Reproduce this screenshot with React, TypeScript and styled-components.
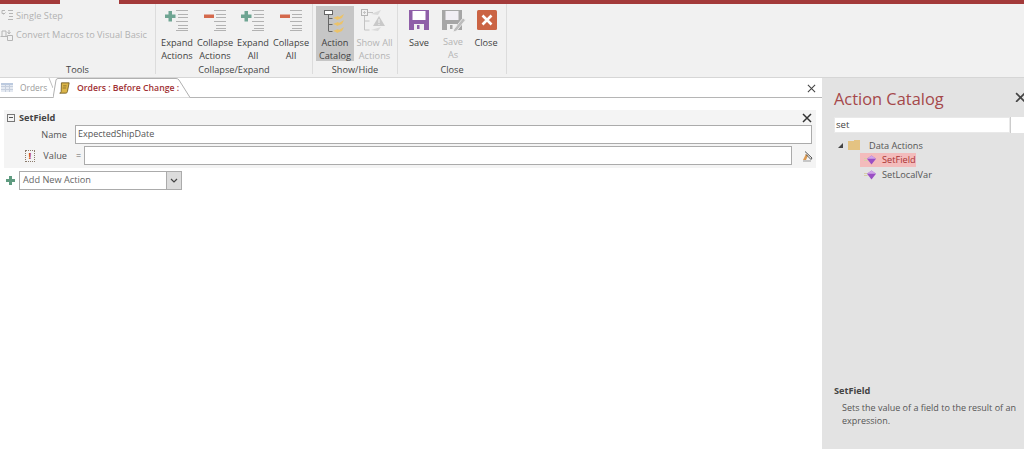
import React from "react";
import styled, { createGlobalStyle } from "styled-components";

const Global = createGlobalStyle`
  html, body { margin: 0; padding: 0; background: #fff; }
  body { font-family: "Open Sans", "Noto Sans", "Liberation Sans", sans-serif; font-size: 10px; color: #444; overflow: hidden; }
  * { box-sizing: border-box; }
  svg { flex: none; }
`;

const Page = styled.div`width: 1024px; height: 449px; display: flex; flex-direction: column; overflow: hidden;`;
const TopBar = styled.div`height: 4px; display: flex; flex: none;`;
const TopSeg = styled.div<{ $w?: number; $active?: boolean }>`
  background: ${p => (p.$active ? "#f1f1f1" : "#a33a3a")};
  ${p => (p.$w ? `width:${p.$w}px;flex:none;` : "flex:1;")}
`;
const Ribbon = styled.div`
  height: 74px; flex: none; display: flex; background: #f1f1f1; border-bottom: 1px solid #d6d6d6;
`;
const Group = styled.section<{ $w: number }>`
  width: ${p => p.$w}px; flex: none; display: flex; flex-direction: column; border-right: 1px solid #dcdcdc; height: 70px;
`;
const GroupBody = styled.div<{ $pad?: number }>`
  flex: 1; display: flex; padding: 2px 0 0 ${p => p.$pad ?? 2}px; min-height: 0;
`;
const GroupLabel = styled.div`
  height: 13px; line-height: 13px; text-align: center; font-size: 9.2px; color: #444; margin-bottom: -1px; position: relative; top: 1px;
`;
const ToolList = styled.div`display: flex; flex-direction: column; gap: 1px; margin-left: -2px;`;
const ToolRow = styled.div`
  display: flex; align-items: center; gap: 2px; height: 18px; color: #b1b1b1; font-size: 9.2px; white-space: nowrap;
`;
const BigButton = styled.div<{ $w?: number; $on?: boolean; $off?: boolean }>`
  width: ${p => p.$w ?? 38}px; height: 55px; flex: none; display: flex; flex-direction: column; align-items: center;
  padding-top: 3px; text-align: center; line-height: 13px; font-size: 9.2px;
  background: ${p => (p.$on ? "#c6c6c6" : "transparent")};
  color: ${p => (p.$off ? "#b4b4b4" : "#3f3f3f")};
  white-space: nowrap;
`;
const BigIcon = styled.div`height: 25px; margin-bottom: 2px; display: flex; align-items: flex-start; justify-content: center;`;

const Main = styled.div`flex: 1; display: flex; min-height: 0;`;
const Work = styled.div`width: 822px; flex: none; display: flex; flex-direction: column;`;
const TabStrip = styled.div`
  height: 20px; flex: none; display: flex; align-items: stretch; border-bottom: 1px solid #b5b5b5; background: #fff; position: relative;
`;
const Tab = styled.div<{ $w: number; $active?: boolean }>`
  width: ${p => p.$w}px; flex: none; position: relative; display: flex; align-items: center; gap: 7px;
  padding-left: ${p => (p.$active ? 5 : 1)}px; font-size: ${p => (p.$active ? 8.7 : 8.4)}px; white-space: nowrap;
  color: ${p => (p.$active ? "#9f2f33" : "#9a9a9a")}; font-weight: ${p => (p.$active ? 600 : 400)};
`;
const TabShape = styled.svg`position: absolute; left: 0; top: 0; pointer-events: none;`;
const TabInner = styled.span`position: relative; display: flex; align-items: center;`;
const StripClose = styled.div`
  position: absolute; right: 5px; top: 4px; width: 10px; height: 10px;
`;
const Canvas = styled.div`flex: 1; padding: 12px 6px 0 4px;`;
const ActionBlock = styled.div`background: #f4f4f4; height: 58px; display: flex; flex-direction: column; gap: 2px; width: 812px;`;
const ActionHead = styled.div`
  height: 13px; margin-top: 1px; margin-bottom: -1px; display: flex; align-items: center; padding: 0 4px 0 3px; font-weight: 700; font-size: 9.2px; color: #444;
`;
const HeadTitle = styled.span`flex: 1; margin-left: 4px;`;
const Collapse = styled.span`
  width: 8px; height: 8px; border: 1px solid #777; position: relative; flex: none;
  &::after { content: ""; position: absolute; left: 1px; right: 1px; top: 2px; height: 1px; background: #555; }
`;
const ArgRow = styled.div`display: flex; align-items: center; height: 19px; margin-top: 0;`;
const ArgLabel = styled.div<{ $w: number }>`
  width: ${p => p.$w}px; flex: none; text-align: right; padding-right: 8px; font-size: 9.2px; color: #555;
`;
const Warn = styled.span`
  width: 10px; height: 12px; border: 1px dotted #8a7a6a; color: #c0392b; font-weight: 800; font-size: 8px; line-height: 10px; text-align: center;
  margin-left: 21px; flex: none;
`;
const Eq = styled.span`width: 9px; flex: none; padding-left: 1px; color: #666; font-size: 9px;`;
const Field = styled.div<{ $w: number; $h?: number }>`
  width: ${p => p.$w}px; height: ${p => p.$h ?? 19}px; flex: none; background: #fff; border: 1px solid #ababab;
  padding-left: 2px; line-height: 16px; font-size: 9px; color: #555;
`;
const Builder = styled.span`margin-left: 10px; display: flex;`;
const AddRow = styled.div`display: flex; align-items: center; margin-top: 3px; padding-left: 2px;`;
const AddPlus = styled.span`width: 13px; flex: none; display: flex;`;
const Combo = styled.div`
  width: 163px; height: 19px; display: flex; background: #fff; border: 1px solid #ababab; font-size: 9.2px; color: #666; line-height: 16px; padding-left: 3px;
`;
const ComboText = styled.span`flex: 1;`;
const ComboBtn = styled.span`
  width: 15px; flex: none; background: #dcdcdc; border-left: 1px solid #ababab; display: flex; align-items: center; justify-content: center;
`;

const Panel = styled.aside`
  width: 202px; flex: none; background: #e3e3e3; display: flex; flex-direction: column; padding: 0 0 0 12px; position: relative;
`;
const PanelTitle = styled.div`font-size: 16.4px; color: #a5484a; line-height: 24px; margin-top: 9px; white-space: nowrap;`;
const PanelClose = styled.div`position: absolute; right: 0; top: 14px; width: 9px; height: 10px; overflow: hidden;`;
const SearchRow = styled.div`display: flex; margin-top: 6px;`;
const SearchBox = styled.div`width: 176px; height: 16px; background: #fff; border: 1px solid #e9e9e9; padding-left: 1px; line-height: 14px; font-size: 9.6px; color: #444;`;
const SearchBtn = styled.div`flex: 1; height: 16px; background: #fff; border-left: 1px solid #ccc;`;
const Tree = styled.div`margin-top: 5px; font-size: 9.2px; color: #555;`;
const TreeRoot = styled.div`display: flex; align-items: center; height: 14px; padding-left: 4px;`;
const Arrow = styled.span`width: 0; height: 0; border-style: solid; border-width: 0 0 5px 5px; border-color: transparent transparent #444 transparent; flex: none;`;
const Folder = styled.span`
  width: 12px; height: 9px; background: #e4c382; margin-left: 5px; flex: none; position: relative;
  &::before { content: ""; position: absolute; right: 0; top: -1px; width: 6px; height: 1px; background: #e4c382; }
`;
const RootText = styled.span`margin-left: 9px;`;
const Leaf = styled.div<{ $sel?: boolean }>`
  display: flex; align-items: center; height: 14px; margin: 0 0 0 26px; padding: 0 0 0 4px; gap: 4px; width: 56px;
  white-space: nowrap; background: ${p => (p.$sel ? "#f3bcbc" : "transparent")}; color: ${p => (p.$sel ? "#a33" : "#555")};
`;
const LeafRow = styled.div`height: 15px; display: flex; align-items: center;`;
const Help = styled.div`margin-top: auto; padding-bottom: 22px;`;
const HelpTitle = styled.div`font-weight: 700; font-size: 9.2px; color: #444; line-height: 13px;`;
const HelpText = styled.div`margin: 4px 0 0 8px; width: 178px; font-size: 9px; line-height: 13px; color: #555;`;

const Lines = () => (
  <path d="M13 1.500h12M15 5.500h10M15 8.500h10M13 12.500h12M15 16.500h10M15 19.500h10M13 21.500h12" stroke="#b2b2b2" strokeWidth="1" fill="none" />
);
const ExpandIcon = () => (
  <svg width="28" height="25" viewBox="0 0 28 25">
    <path d="M5.500 2h3.500v3.500h3.500v3.500h-3.500v3.500h-3.500v-3.500h-3.500v-3.500h3.500z" fill="#6fa593" />
    <Lines />
  </svg>
);
const CollapseIcon = () => (
  <svg width="28" height="25" viewBox="0 0 28 25"><rect x="3" y="5.500" width="10" height="3.500" fill="#d4694c" /><Lines /></svg>
);
const CatalogIcon = () => (
  <svg width="28" height="27" viewBox="0 0 28 27">
    <rect x="3.500" y="1.500" width="8" height="4" fill="#fff" stroke="#666" />
    <path d="M7.500 6v16M7.500 9.500h4M7.500 15.500h4M7.500 22.500h4" stroke="#666" fill="none" />
    <path d="M12 9l5-2 1 1 5-3-2 4-5 2-1-1zM12 15l5-2 1 1 5-3-2 4-5 2-1-1zM12 22l5-2 1 1 5-3-2 4-5 2-1-1z" fill="#ecc36a" />
  </svg>
);
const ShowAllIcon = () => (
  <svg width="28" height="27" viewBox="0 0 28 27">
    <rect x=".5" y=".5" width="6" height="6" fill="none" stroke="#b5b5b5" />
    <path d="M2 3.500h3M3.500 2v3M3.500 7v14M7 3.500h5M3.500 12h5M3.500 21h5" stroke="#c4c4c4" fill="none" />
    <path d="M10 5l10-4-3 5zM10 21l10-3-3 4z" fill="#dadada" />
    <path d="M18 7l6 10h-12z" fill="#c9c9c9" />
    <path d="M18 10v4M18 15v1" stroke="#f4f4f4" />
  </svg>
);
const SaveIcon = ({ off }: { off?: boolean }) => {
  const body = off ? "#a6a6a6" : "#8f5fa8";
  return (
    <svg width="26" height="24" viewBox="0 0 26 24">
      <g transform={off ? "translate(-1 0)" : undefined}>
        <path d="M3 1h20v20h-20z" fill={body} />
        <rect x="6.500" y="2" width="13" height="9" fill={off ? "#f1eef4" : "#fff"} />
        <rect x="8" y="15" width="10" height="6" fill="#f1f1f1" />
        <rect x="11" y="16" width="2.500" height="4" fill={body} />
      </g>
      {off && <path d="M14 20l9-11 2.500 2-9 11-3.500 1z" fill="#bdbdbd" stroke="#f1f1f1" strokeWidth=".8" />}
    </svg>
  );
};
const CloseIcon = () => (
  <svg width="24" height="24" viewBox="0 0 24 24">
    <rect x="3" y="1" width="20" height="20" rx="1.500" fill="#cb6444" />
    <path d="M8.500 6.500l9 9M17.500 6.500l-9 9" stroke="#fff" strokeWidth="2.600" />
  </svg>
);
const StepIcon = () => (
  <svg width="14" height="13" viewBox="0 0 14 13"><path d="M2 1.500h3M2 1.500v3h3M3.500 5.500l2-2M8 1.500h5M9 4.500h4M9 7.500h4M8 10.500h5" stroke="#b5b5b5" fill="none" /></svg>
);
const ConvertIcon = () => (
  <svg width="14" height="13" viewBox="0 0 14 13"><path d="M2 8v-5h4v5M.5 8.500h7M9 2v3M7.500 4l1.500 2 1.500-2M7.500 7.500h5v5h-5z" stroke="#b5b5b5" fill="none" /></svg>
);
const X = ({ s = 10, w = 1.200, c = "#444" }: { s?: number; w?: number; c?: string }) => (
  <svg width={s} height={s} viewBox="0 0 10 10"><path d="M1 1l8 8M9 1l-8 8" stroke={c} strokeWidth={w} /></svg>
);
const TableIcon = () => (
  <svg width="12" height="9" viewBox="0 0 12 9">
    <rect width="12" height="9" fill="#e4e9f1" />
    <path d="M0 3.500h12M0 6.500h12M4.500 0v9M8.500 0v9" stroke="#c6cfdd" />
    <rect width="12" height="2" fill="#bccadf" />
  </svg>
);
const ScrollIcon = () => (
  <svg width="12" height="12" viewBox="0 0 14 14">
    <path d="M4 1h9l-2 10c-.3 1.500-1 2-2 2h-7c1 0 1.500-1 1.700-2z" fill="#dcb649" stroke="#6f5a22" strokeWidth="1" />
    <path d="M6 4.500h4M5.500 7h4" stroke="#6f5a22" strokeWidth=".8" />
  </svg>
);
const GemIcon = () => (
  <svg width="14" height="10" viewBox="0 0 14 10">
    <path d="M0 3.500h3.500M0 5.500h3.500" stroke="#d6cfa8" strokeWidth="1.200" />
    <path d="M7.500 .5l4.500 3.200-4.500 5.800-4.500-5.800z" fill="#9a4fc4" />
    <path d="M7.500 .5l4.500 3.200h-9z" fill="#d0a5e8" />
  </svg>
);
const BuilderIcon = () => (
  <svg width="11" height="12" viewBox="0 0 11 12">
    <path d="M1 10l3-6 2 1.500-2 4.500z" fill="#dc9a52" />
    <path d="M3 1.500l7 6.500-1 1.500-5-5" stroke="#555" fill="none" />
    <path d="M1 11h8" stroke="#999" />
  </svg>
);

const collapseButtons = [
  ["Expand", "Actions", false],
  ["Collapse", "Actions", true],
  ["Expand", "All", false],
  ["Collapse", "All", true],
] as const;

export default function App() {
  return (
    <Page>
      <Global />
      <TopBar>
        <TopSeg $w={60} />
        <TopSeg $w={59} $active />
        <TopSeg />
      </TopBar>
      <Ribbon>
        <Group $w={156}>
          <GroupBody>
            <ToolList>
              <ToolRow><StepIcon />Single Step</ToolRow>
              <ToolRow><ConvertIcon />Convert Macros to Visual Basic</ToolRow>
            </ToolList>
          </GroupBody>
          <GroupLabel>Tools</GroupLabel>
        </Group>
        <Group $w={157}>
          <GroupBody>
            {collapseButtons.map(([a, b, col], i) => (
              <BigButton key={i} $w={38}>
                <BigIcon>{col ? <CollapseIcon /> : <ExpandIcon />}</BigIcon>
                {a}<br />{b}
              </BigButton>
            ))}
          </GroupBody>
          <GroupLabel>Collapse/Expand</GroupLabel>
        </Group>
        <Group $w={85}>
          <GroupBody $pad={3}>
            <BigButton $w={38} $on><BigIcon><CatalogIcon /></BigIcon>Action<br />Catalog</BigButton>
            <BigButton $w={41} $off><BigIcon><ShowAllIcon /></BigIcon>Show All<br />Actions</BigButton>
          </GroupBody>
          <GroupLabel>Show/Hide</GroupLabel>
        </Group>
        <Group $w={109}>
          <GroupBody $pad={3}>
            <BigButton $w={36}><BigIcon><SaveIcon /></BigIcon>Save</BigButton>
            <BigButton $w={32} $off><BigIcon><SaveIcon off /></BigIcon>Save<br />As</BigButton>
            <BigButton $w={34}><BigIcon><CloseIcon /></BigIcon>Close</BigButton>
          </GroupBody>
          <GroupLabel>Close</GroupLabel>
        </Group>
      </Ribbon>
      <Main>
        <Work>
          <TabStrip>
            <Tab $w={53}>
              <TabShape width="53" height="20" viewBox="0 0 53 20">
                <path d="M49 0l4 10" fill="none" stroke="#c0c0c0" />
              </TabShape>
              <TabInner><TableIcon /></TabInner>
              Orders
            </Tab>
            <Tab $w={137} $active>
              <TabShape width="137" height="20" viewBox="0 0 137 20">
                <path d="M0 20L3 2q.5-1.500 2-1.500h118q2 0 3 1.500l11 17.500" fill="#fff" stroke="#b0b0b0" />
              </TabShape>
              <TabInner><ScrollIcon /></TabInner>
              <TabInner>Orders : Before Change :</TabInner>
            </Tab>
            <StripClose><X s={9} /></StripClose>
          </TabStrip>
          <Canvas>
            <ActionBlock>
              <ActionHead>
                <Collapse />
                <HeadTitle>SetField</HeadTitle>
                <X s={10} w={1.500} c="#333" />
              </ActionHead>
              <ArgRow>
                <ArgLabel $w={71}>Name</ArgLabel>
                <Field $w={737}>ExpectedShipDate</Field>
              </ArgRow>
              <ArgRow>
                <Warn>!</Warn>
                <ArgLabel $w={40}>Value</ArgLabel>
                <Eq>=</Eq>
                <Field $w={708} />
                <Builder><BuilderIcon /></Builder>
              </ArgRow>
            </ActionBlock>
            <AddRow>
              <AddPlus><svg width="9" height="9" viewBox="0 0 9 9"><path d="M3 0h3v3h3v3h-3v3h-3v-3h-3v-3h3z" fill="#5f9b80" /></svg></AddPlus>
              <Combo>
                <ComboText>Add New Action</ComboText>
                <ComboBtn><svg width="8" height="5" viewBox="0 0 8 5"><path d="M1 1l3 3 3-3" stroke="#444" fill="none" strokeWidth="1.200" /></svg></ComboBtn>
              </Combo>
            </AddRow>
          </Canvas>
        </Work>
        <Panel>
          <PanelTitle>Action Catalog</PanelTitle>
          <PanelClose><X s={11} w={1.500} /></PanelClose>
          <SearchRow>
            <SearchBox>set</SearchBox>
            <SearchBtn />
          </SearchRow>
          <Tree>
            <TreeRoot><Arrow /><Folder /><RootText>Data Actions</RootText></TreeRoot>
            <LeafRow><Leaf $sel><GemIcon />SetField</Leaf></LeafRow>
            <LeafRow><Leaf><GemIcon />SetLocalVar</Leaf></LeafRow>
          </Tree>
          <Help>
            <HelpTitle>SetField</HelpTitle>
            <HelpText>Sets the value of a field to the result of an expression.</HelpText>
          </Help>
        </Panel>
      </Main>
    </Page>
  );
}
